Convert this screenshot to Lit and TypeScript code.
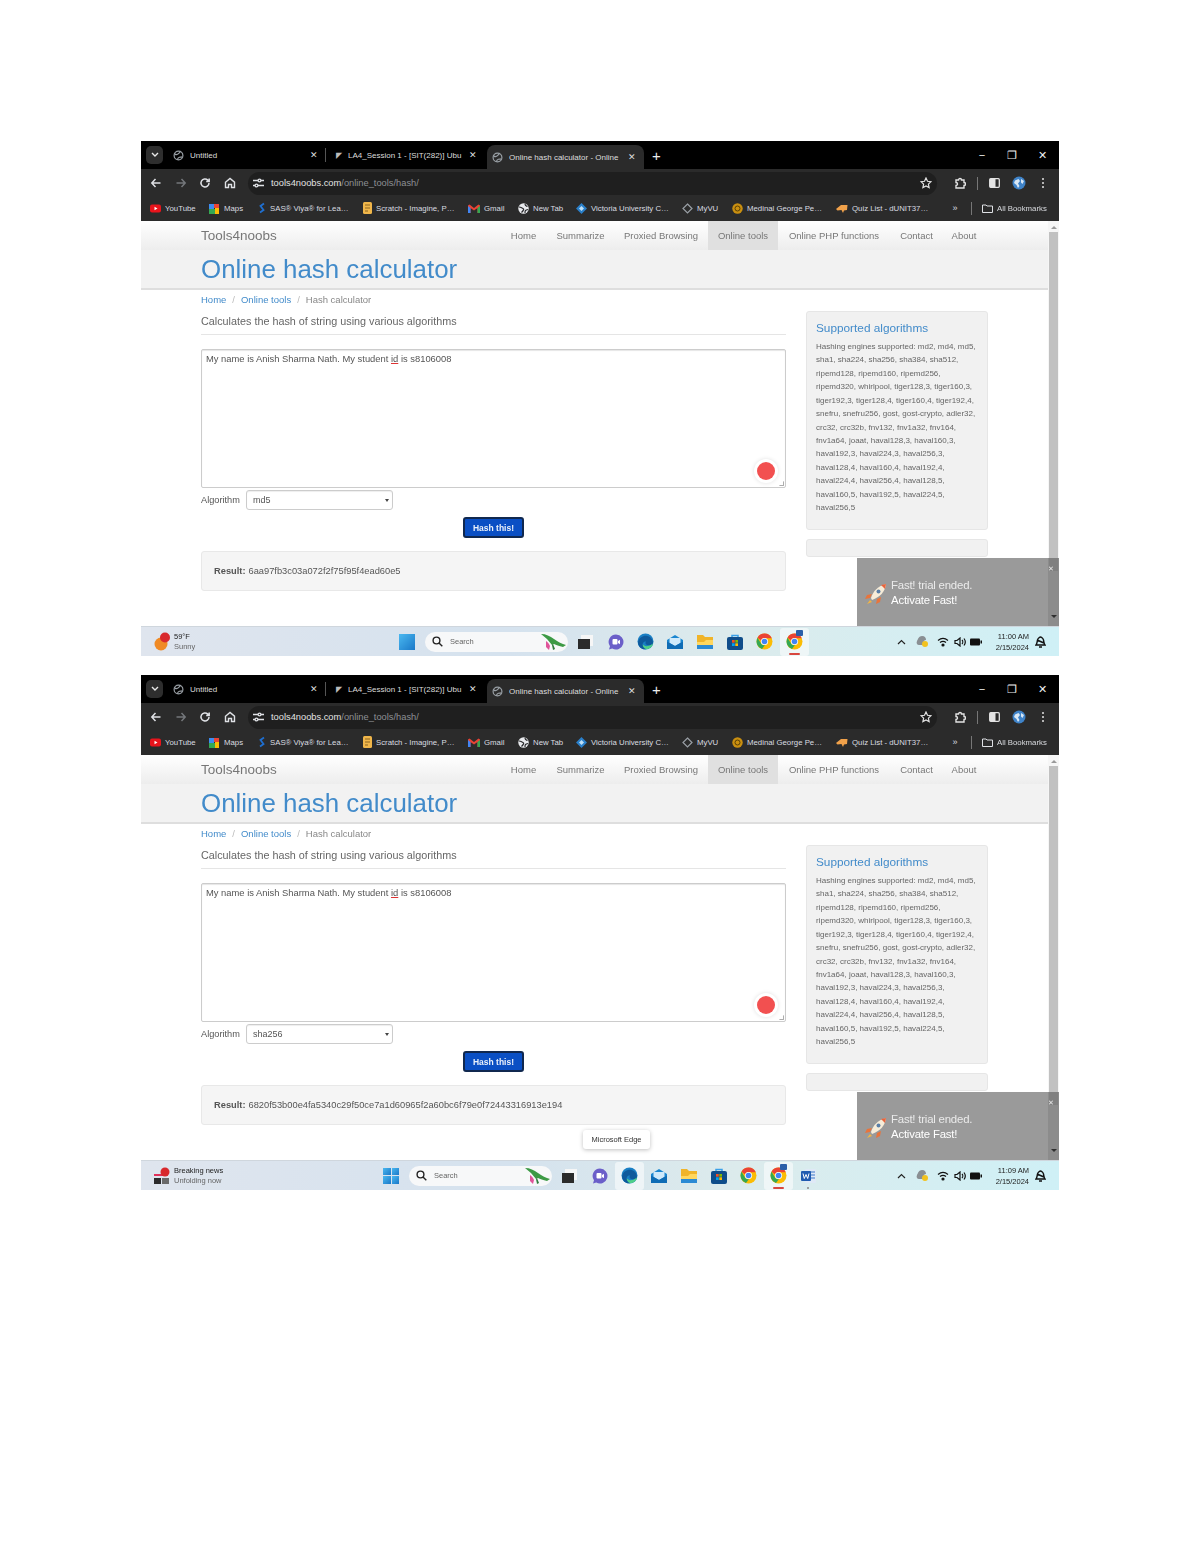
import { LitElement, html, css } from "lit";
import { customElement, property } from "lit/decorators.js";

const ALGOS = [
  "Hashing engines supported: md2, md4, md5,",
  "sha1, sha224, sha256, sha384, sha512,",
  "ripemd128, ripemd160, ripemd256,",
  "ripemd320, whirlpool, tiger128,3, tiger160,3,",
  "tiger192,3, tiger128,4, tiger160,4, tiger192,4,",
  "snefru, snefru256, gost, gost-crypto, adler32,",
  "crc32, crc32b, fnv132, fnv1a32, fnv164,",
  "fnv1a64, joaat, haval128,3, haval160,3,",
  "haval192,3, haval224,3, haval256,3,",
  "haval128,4, haval160,4, haval192,4,",
  "haval224,4, haval256,4, haval128,5,",
  "haval160,5, haval192,5, haval224,5,",
  "haval256,5",
];

const NAV: [string, number, boolean][] = [
  ["Home", 47, false],
  ["Summarize", 67, false],
  ["Proxied Browsing", 94, false],
  ["Online tools", 70, true],
  ["Online PHP functions", 112, false],
  ["Contact", 53, false],
  ["About", 42, false],
];

const globe = (c = "#9aa0a6") => html`<svg width="11" height="11" viewBox="0 0 12 12" fill="none" stroke=${c} stroke-width="1.3"><circle cx="6" cy="6" r="4.8"/><path d="M2 4.5c2 1 3 .5 4-.5s2-2 2-2.500M5 10.500c0-2 1-2 2-2.500s2 0 3-.5"/></svg>`;

const mark = {
  yt: html`<svg width="11" height="9" viewBox="0 0 11 9"><rect width="11" height="8" y=".5" rx="2" fill="#e8141c"/><path d="M4.500 2.700v3.600L7.500 4.500z" fill="#fff"/></svg>`,
  maps: html`<svg width="11" height="11" viewBox="0 0 11 11"><path d="M0 1h5v5H0z" fill="#3c8bf0"/><path d="M5 1h5v4H5z" fill="#ea4335"/><path d="M0 6h6v5H0z" fill="#34a853"/><path d="M6 5h4v6H6z" fill="#fbbc04"/></svg>`,
  sas: html`<svg width="8" height="12" viewBox="0 0 8 12" fill="none" stroke="#1f6fd0" stroke-width="1.800"><path d="M6 1.500 2.500 4 5.500 8 2 10.500"/></svg>`,
  scratch: html`<svg width="9" height="12" viewBox="0 0 9 12"><rect width="9" height="12" rx="1.500" fill="#f0b64a"/><path d="M2 3h5M2 6h5M2 9h3" stroke="#8a6420"/></svg>`,
  gmail: html`<svg width="12" height="9" viewBox="0 0 12 9"><path d="M0 1.500 1.500.5 6 4 10.500.5 12 1.500V9H9.500V4L6 6.500 2.500 4V9H0z" fill="#ea4335"/><path d="M0 2v7h2.500V4z" fill="#4285f4"/><path d="M12 2v7H9.500V4z" fill="#34a853"/></svg>`,
  newtab: html`<svg width="11" height="11" viewBox="0 0 11 11"><circle cx="5.500" cy="5.500" r="5.200" fill="#e8eaed"/><path d="M1 4c2 0 2.500 1 4 1.500S5 8 3.500 9.500M7 1c0 2 1 2 2.500 2.500M7 10c0-2 0-3 3-3.500" stroke="#292a2d" stroke-width="1.200" fill="none"/></svg>`,
  vu: html`<svg width="11" height="11" viewBox="0 0 11 11"><path d="M5.500 0 11 5.500 5.500 11 0 5.500z" fill="#2a7fc9"/><path d="M5.500 3 8 5.500 5.500 8 3 5.500z" fill="#bfe0f7"/></svg>`,
  myvu: html`<svg width="11" height="11" viewBox="0 0 11 11" fill="none" stroke="#9aa0a6" stroke-width="1.200"><path d="M5.500 1 10 5.500 5.500 10 1 5.500z"/></svg>`,
  george: html`<svg width="11" height="11" viewBox="0 0 11 11"><circle cx="5.500" cy="5.500" r="5.200" fill="#c98f10"/><circle cx="5.500" cy="5.500" r="2.500" fill="none" stroke="#5a3f05"/></svg>`,
  quiz: html`<svg width="12" height="9" viewBox="0 0 12 9"><path d="M0 5 5 1h6.500L11 6l-3 .5L7 9 5.500 6 1.500 6.500z" fill="#f0a14a"/></svg>`,
};

const BOOKMARKS: [any, string, number][] = [
  [mark.yt, "YouTube", 59],
  [mark.maps, "Maps", 49],
  [mark.sas, "SAS® Viya® for Lea…", 105],
  [mark.scratch, "Scratch - Imagine, P…", 105],
  [mark.gmail, "Gmail", 50],
  [mark.newtab, "New Tab", 58],
  [mark.vu, "Victoria University C…", 106],
  [mark.myvu, "MyVU", 50],
  [mark.george, "Medinal George Pe…", 104],
  [mark.quiz, "Quiz List - dUNIT37…", 105],
];

const ico = {
  back: html`<svg width="12" height="12" viewBox="0 0 12 12" fill="none" stroke="#dfe1e5" stroke-width="1.500"><path d="M10.500 6H2M5.500 2 1.800 6l3.700 4"/></svg>`,
  forward: html`<svg width="12" height="12" viewBox="0 0 12 12" fill="none" stroke="#74777b" stroke-width="1.500"><path d="M1.500 6H10M6.500 2l3.700 4-3.700 4"/></svg>`,
  reload: html`<svg width="12" height="12" viewBox="0 0 12 12" fill="none" stroke="#dfe1e5" stroke-width="1.500"><path d="M10 6a4 4 0 1 1-1.200-2.900L10 4.300M10.200 1.500v3H7.200"/></svg>`,
  home: html`<svg width="12" height="12" viewBox="0 0 12 12" fill="none" stroke="#dfe1e5" stroke-width="1.400"><path d="M1.500 5.200 6 1.500l4.500 3.700v5.300h-3V7.500h-3v3h-3z"/></svg>`,
  tune: html`<svg width="11" height="10" viewBox="0 0 11 10" fill="none" stroke="#dfe1e5" stroke-width="1.300"><path d="M0 2.500h5M8 2.500h3M0 7.500h2M5 7.500h6"/><circle cx="6.500" cy="2.500" r="1.400"/><circle cx="3.500" cy="7.500" r="1.400"/></svg>`,
  star: html`<svg width="12" height="12" viewBox="0 0 12 12" fill="none" stroke="#e3e3e3" stroke-width="1.200"><path d="m6 1 1.500 3.300 3.500.4-2.600 2.400.7 3.500L6 8.900l-3.100 1.700.7-3.500L1 4.700l3.500-.4z"/></svg>`,
  ext: html`<svg width="12" height="12" viewBox="0 0 12 12" fill="none" stroke="#e3e3e3" stroke-width="1.400"><path d="M2 3h2.500a1.500 1.500 0 0 1 3 0H10v2.500a1.500 1.500 0 0 1 0 3V11H2V8.500a1.500 1.500 0 0 0 0-3z"/></svg>`,
  panel: html`<svg width="11" height="10" viewBox="0 0 11 10"><rect x=".7" y=".7" width="9.600" height="8.600" rx="1" fill="none" stroke="#e3e3e3" stroke-width="1.300"/><rect x="1" y="1" width="5.500" height="8" fill="#e3e3e3"/></svg>`,
  profile: html`<svg width="14" height="14" viewBox="0 0 14 14"><circle cx="7" cy="7" r="6.500" fill="#3f83c8"/><path d="M3 4.500 6.500 3 8 5 6 7.500 7.500 10 6 12 4.500 9 2 7zM9 3l3 2-1.500 3L9 6.500z" fill="#d9e8f5"/></svg>`,
  dots: html`<svg width="4" height="12" viewBox="0 0 4 12" fill="#e3e3e3"><circle cx="2" cy="2" r="1"/><circle cx="2" cy="6" r="1"/><circle cx="2" cy="10" r="1"/></svg>`,
  folder: html`<svg width="11" height="9" viewBox="0 0 11 9" fill="none" stroke="#dfe1e5"><path d="M.5 1h3.500l1 1h5.500v6.500H.5z"/></svg>`,
  rocket: html`<svg width="24" height="24" viewBox="0 0 24 24"><path d="M8 11 3 12l-2 4 5-1zM13 16l-1 5 4-2 1-5z" fill="#e8743c"/><path d="M7 15c2-7 7-12 15-14-1 8-6 13-14 16z" fill="#f7ecd8"/><path d="M17 2l5-1-1 5z" fill="#e8643c"/><circle cx="14.500" cy="8.500" r="2" fill="#5a7fa8"/><path d="m6 17-3 4 5-2z" fill="#f2b544"/></svg>`,
  search: html`<svg width="11" height="11" viewBox="0 0 11 11" fill="none" stroke="#222" stroke-width="1.400"><circle cx="4.500" cy="4.500" r="3.400"/><path d="m7 7 3.300 3.300"/></svg>`,
  frog: html`<svg width="30" height="18" viewBox="0 0 30 18"><path d="M3 1c5 0 9 2 13 5s8 5 12 6l-3 2c-4-1-7-2-9-3l-2 1-5-6z" fill="#3d9a45"/><path d="M8 8c2 1 3 3 4 5l-1 4-3-3z" fill="#e0559a"/><path d="M15 11l2 5-2 1-1-5z" fill="#2e7d3c"/></svg>`,
  chev: html`<svg width="8" height="6" viewBox="0 0 8 6" fill="none" stroke="#e8e8e8" stroke-width="1.400"><path d="m1 1 3 3 3-3"/></svg>`,
  taskview: html`<svg width="15" height="14" viewBox="0 0 15 14"><rect x="3" y="0" width="12" height="11" fill="#f6f6f6"/><rect x="0" y="4" width="12" height="10" fill="#2b2b2b"/></svg>`,
  chat: html`<svg width="16" height="16" viewBox="0 0 16 16"><path d="M8 .5a7.500 7.500 0 1 1-3.800 14L1 15.500l1-3.200A7.500 7.500 0 0 1 8 .5z" fill="#6b5fc9"/><rect x="4.500" y="5" width="5" height="5.500" rx="1" fill="#fff"/><path d="m10 7 2-1.200v4.500L10 9z" fill="#fff"/></svg>`,
  edge: html`<svg width="17" height="17" viewBox="0 0 17 17"><circle cx="8.500" cy="8.500" r="8" fill="#1a7fc4"/><path d="M1 9.500C2 4 7 2 10.500 3 14 4 16 7 16 10c0 2-3 2.500-5.500 2C8.500 11.500 8 10 9 8.500 6.500 8 5 10.500 6 13c.5 1.500 2 3 3 3.200C5 17 1.500 14 1 9.500z" fill="#0f5a9c"/><path d="M16 10.500c-.5 3-3 5.500-6.500 5.800-2.500-.8-4-3-3.700-5C7 13 10 15 16 10.500z" fill="#50d088"/></svg>`,
  mail: html`<svg width="16" height="14" viewBox="0 0 16 14"><path d="M8 0 16 5v9H0V5z" fill="#1a86d0"/><path d="M2.500 3h11v5L8 11 2.500 8z" fill="#cfeafb"/><path d="M0 6.500 8 11l8-4.500V14H0z" fill="#0f6cb5"/></svg>`,
  files: html`<svg width="16" height="14" viewBox="0 0 16 14"><path d="M0 0h6l2 2h8v12H0z" fill="#f0b429"/><path d="M0 7h7l2-2h7v9H0z" fill="#ffd75e"/><rect y="10" width="16" height="4" fill="#2b8ad4"/></svg>`,
  store: html`<svg width="16" height="16" viewBox="0 0 16 16"><rect y="3" width="16" height="13" rx="2" fill="#0f4d8a"/><path d="M5 3V1.500h6V3" fill="none" stroke="#3aa0e8" stroke-width="1.500"/><rect x="5" y="6" width="2.700" height="2.700" fill="#f25022"/><rect x="8.300" y="6" width="2.700" height="2.700" fill="#7fba00"/><rect x="5" y="9.300" width="2.700" height="2.700" fill="#00a4ef"/><rect x="8.300" y="9.300" width="2.700" height="2.700" fill="#ffb900"/></svg>`,
  chrome: html`<svg width="17" height="17" viewBox="0 0 17 17"><circle cx="8.500" cy="8.500" r="8" fill="#fbbc04"/><path d="M1.500 4.800A8 8 0 0 1 15.800 5.200H8.500a3.500 3.500 0 0 0-3.300 2.400z" fill="#ea4335"/><path d="M1.500 4.800 5.200 10.800a3.500 3.500 0 0 0 3.800 1.200L6 16.100A8 8 0 0 1 1.500 4.800z" fill="#34a853"/><circle cx="8.500" cy="8.500" r="3.600" fill="#fff"/><circle cx="8.500" cy="8.500" r="2.800" fill="#4285f4"/></svg>`,
  word: html`<svg width="15" height="16" viewBox="0 0 15 16"><rect x="4" y="1" width="11" height="14" rx="1" fill="#dfe9f6"/><path d="M9 4h5M9 7h5M9 10h5" stroke="#3a78c9"/><rect y="3" width="10" height="10" rx="1" fill="#1f5bb0"/><path d="m2 5.500 1.300 5 1.700-4 1.700 4L8 5.500" fill="none" stroke="#fff"/></svg>`,
  weather: html`<svg width="13" height="13" viewBox="0 0 13 13"><path d="M6 1c3 0 4 2 4 4-2 0-3 2-3 5H3C1 10 0 8 1 6s2-5 5-5z" fill="#8a8f93"/><circle cx="9" cy="9" r="3" fill="#f2c21f"/></svg>`,
  wifi: html`<svg width="12" height="10" viewBox="0 0 12 10" fill="none" stroke="#111" stroke-width="1.200"><path d="M1 3.500C4 1 8 1 11 3.500M3 5.500c2-1.500 4-1.500 6 0"/><circle cx="6" cy="8" r="1" fill="#111"/></svg>`,
  sound: html`<svg width="12" height="10" viewBox="0 0 12 10" fill="none" stroke="#111" stroke-width="1.200"><path d="M1 3.500h2L6 1v8L3 6.500H1zM8 3c1 1 1 3 0 4M10 1.500c1.500 2 1.500 5 0 7"/></svg>`,
  battery: html`<svg width="12" height="8" viewBox="0 0 12 8"><rect width="10" height="7" y=".5" rx="1" fill="#111"/><rect x="10.500" y="2.500" width="1.500" height="3" fill="#111"/></svg>`,
  bell: html`<svg width="11" height="12" viewBox="0 0 11 12" fill="none" stroke="#111" stroke-width="1.400"><path d="M1 9c1-1 1-3 1.500-5S5 1 5.500 1 8 2 8.500 4 9 8 10 9zM4 11h3M2 4l7 3"/></svg>`,
  sun: html`<svg width="18" height="19" viewBox="0 0 18 19"><circle cx="7" cy="12" r="6.500" fill="#f08a24"/><circle cx="11" cy="5.500" r="5" fill="#d8282c"/></svg>`,
  news: html`<svg width="18" height="18" viewBox="0 0 18 18"><path d="M0 8h10" stroke="#e0305a" stroke-width="2"/><circle cx="11" cy="5" r="4.500" fill="#d8282c"/><rect y="11" width="7" height="6" fill="#2b2b2b"/><rect x="8" y="11" width="7" height="6" fill="#6a6a6a"/></svg>`,
};

@customElement("hash-shot")
class HashShot extends LitElement {
  @property() algo = "md5";
  @property() hash = "";
  @property() time = "";
  @property() widgetTop = "";
  @property() widgetSub = "";
  @property({ type: Number }) offset = 0;
  @property({ type: Boolean }) later = false;

  static styles = css`
    :host { display: block; width: 918px; height: 515px; font-family: "Liberation Sans", Arial, sans-serif; }
    .shot { display: grid; grid-template-rows: 28px 28px 24px 405px 30px; height: 515px; filter: blur(0.45px); }

    .tabs { background: #000; display: flex; align-items: stretch; padding-left: 5px; color: #dcdcdc; font-size: 8px; }
    .chev { width: 17px; height: 18px; margin: 5px 5px 0 0; border-radius: 5px; background: #2e2e2e; display: flex; align-items: center; justify-content: center; }
    .tab { display: flex; align-items: center; gap: 6px; padding: 0 10px 0 4px; box-sizing: border-box; }
    .tab .t { flex: 1; white-space: nowrap; overflow: hidden; }
    .tab .x { font-size: 9px; color: #ddd; }
    .tab.first { width: 157px; padding-left: 5px; padding-right: 7px; }
    .tab.second { width: 162px; padding-left: 10px; border-left: 1px solid #555; height: 14px; align-self: center; }
    .tab.active { width: 157px; background: #2b2b2b; border-radius: 8px 8px 0 0; padding-left: 5px; padding-right: 8px; margin-top: 4px; }
    .plus { margin-left: 8px; align-self: center; color: #eee; font-size: 15px; line-height: 1; }
    .win { margin-left: auto; padding-right: 2px; display: flex; align-items: center; color: #eee; font-size: 11px; }
    .win span { width: 30px; text-align: center; }

    .bar { background: #2b2b2b; display: flex; align-items: center; padding-left: 9px; }
    .nav-i { width: 24.500px; display: flex; }
    .omni { width: 689px; height: 23px; background: #1f1f1f; border-radius: 12px; display: flex; align-items: center; padding: 0 5px; box-sizing: border-box; gap: 7px; color: #8d9094; font-size: 9.300px; }
    .omni b { color: #e3e3e3; font-weight: 400; }
    .omni .url { flex: 1; white-space: nowrap; }
    .tools { display: flex; align-items: center; margin-left: 17px; }
    .sep { width: 1px; height: 13px; background: #777; }

    .marks { background: #2b2b2b; display: flex; align-items: center; padding: 0 0 2px 9px; color: #dadce0; font-size: 7.800px; }
    .mk { display: flex; align-items: center; gap: 4px; white-space: nowrap; box-sizing: border-box; padding-right: 8px; }
    .more { width: 28px; text-align: center; margin-right: 2px; font-size: 9px; }
    .all { display: flex; align-items: center; gap: 4px; margin-left: 10px; white-space: nowrap; }

    .view { position: relative; display: flex; overflow: hidden; background: #fff; }
    .doc { flex: 1; min-width: 0; }
    .navbar { height: 29px; background: linear-gradient(#fff, #ededed); display: flex; align-items: center; padding: 0 63px 0 60px; color: #777; }
    .brand { font-size: 13.500px; }
    .links { margin-left: auto; display: flex; align-self: stretch; font-size: 9.500px; }
    .links span { display: flex; align-items: center; justify-content: center; white-space: nowrap; }
    .links .on { background: #e0e0e0; }
    .jumbo { height: 38px; background: #f2f2f2; border-bottom: 2px solid #dedede; padding-left: 60px; display: flex; align-items: center; color: #428bca; font-size: 25.900px; }
    .crumb { padding: 4px 0 0 60px; height: 14px; font-size: 9.500px; color: #888; line-height: 12px; }
    .crumb a { color: #428bca; }
    .crumb i { font-style: normal; color: #bbb; margin: 0 6px; }
    .cols { display: flex; gap: 20px; padding-left: 60px; align-items: flex-start; margin-top: 5px; }
    .left { width: 585px; }
    .lead { font-size: 10.800px; color: #666; height: 21px; line-height: 16px; border-bottom: 1px solid #e5e5e5; }
    .area { position: relative; margin-top: 14px; height: 139px; box-sizing: border-box; border: 1px solid #ccc; border-radius: 2px; box-shadow: inset 0 1px 1px rgba(0,0,0,.1); padding: 3px 4px; font-size: 9.400px; color: #555; line-height: 12px; }
    .area u { text-decoration-color: #d33; }
    .dot { position: absolute; right: 10px; bottom: 7px; width: 18px; height: 18px; border-radius: 50%; background: #f25050; box-shadow: 0 0 0 3px #fff, 0 0 4px 3px rgba(0,0,0,.12); }
    .grip { position: absolute; right: 0; bottom: 0; width: 6px; height: 6px; border-right: 1px solid #777; border-bottom: 1px solid #777; transform: scale(.6); }
    .row { display: flex; align-items: center; margin-top: 2px; height: 20px; font-size: 9.200px; color: #555; gap: 6px; }
    .row label { width: 39px; white-space: nowrap; }
    .sel { width: 147px; height: 20px; box-sizing: border-box; border: 1px solid #ccc; border-radius: 3px; display: flex; align-items: center; justify-content: space-between; padding: 0 3px 0 6px; font-size: 9px; color: #555; box-shadow: inset 0 1px 1px rgba(0,0,0,.07); }
    .sel::after { content: ""; border: 2.500px solid transparent; border-top: 3px solid #444; margin-top: 3px; }
    .btnrow { display: flex; justify-content: center; margin-top: 7px; }
    .btn { width: 61px; height: 21px; box-sizing: border-box; border: 2px solid #10284f; border-radius: 3px; background: #0a4fc4; color: #eaf1fb; font-size: 8.500px; font-weight: 700; display: flex; align-items: center; justify-content: center; }
    .result { margin-top: 13px; height: 40px; box-sizing: border-box; background: #f5f5f5; border: 1px solid #e8e8e8; border-radius: 3px; padding-left: 12px; display: flex; align-items: center; gap: 3px; font-size: 9.300px; color: #555; white-space: nowrap; }
    .right { width: 182px; margin-top: -2px; }
    .well { background: #f1f1f1; border: 1px solid #e6e6e6; border-radius: 3px; box-sizing: border-box; }
    .algos { height: 219px; padding: 9px 9px 0; }
    .algos h4 { margin: 0 0 4px; font-weight: 400; font-size: 11.800px; line-height: 15px; color: #428bca; }
    .algos div { font-size: 8px; line-height: 13.420px; color: #666; white-space: nowrap; }
    .empty { height: 18px; margin-top: 9px; }

    .scroll { width: 11px; background: #f6f6f6; position: relative; display: flex; flex-direction: column; align-items: center; }
    .up { width: 0; height: 0; border: 3px solid transparent; border-bottom: 3.500px solid #999; margin-top: 2px; }
    .thumb { width: 9px; flex: 1; background: #c1c1c1; margin: 3px 0 55px; }

    .toast { position: absolute; right: 0; bottom: 0; width: 202px; height: 68px; background: rgba(120,120,120,.75); color: #fff; display: flex; align-items: center; gap: 3px; padding-left: 7px; box-sizing: border-box; }
    .toast::after { content: ""; position: absolute; right: 0; top: 0; bottom: 0; width: 11px; background: rgba(0,0,0,.08); }
    .toast svg { margin-top: 6px; }
    .toast .lines { font-size: 11.400px; line-height: 14.500px; letter-spacing: -.2px; padding-top: 1px; }
    .toast .lines span { display: block; }
    .toast .lines .dim { opacity: .8; }
    .toast .close { position: absolute; right: 5px; top: 7px; font-size: 7px; }
    .toast .down { position: absolute; right: 2px; bottom: 5px; border: 3px solid transparent; border-top: 3.500px solid #333; }
    .tip { position: absolute; left: 442px; bottom: 11px; width: 67px; height: 19px; background: #fff; border-radius: 3px; box-shadow: 0 1px 4px rgba(0,0,0,.25); color: #333; font-size: 7.500px; display: flex; align-items: center; justify-content: center; white-space: nowrap; }

    .task { background: linear-gradient(90deg, #dfe5ee 0%, #d5e2ee 40%, #dcebec 65%, #cff0f6 100%); display: flex; align-items: center; color: #222; border-top: 1px solid #cfd6dd; box-sizing: border-box; }
    .widget { display: flex; align-items: center; gap: 2px; padding-left: 13px; width: 100px; box-sizing: border-box; font-size: 7.500px; line-height: 10px; white-space: nowrap; }
    .widget small { display: block; font-size: 7.500px; color: #666; }
    .center { display: flex; align-items: center; }
    .start { width: 16px; height: 16px; display: grid; grid-template: 1fr 1fr / 1fr 1fr; margin-right: 10px; background: linear-gradient(135deg, #4ab8f0, #1a78c8); }
    .start.split { gap: 1px; background: none; }
    .start.split i { background: linear-gradient(135deg, #4ab8f0, #1a78c8); }
    .searchbox { width: 143px; height: 20px; border-radius: 10px; background: #f7f8f9; display: flex; align-items: center; gap: 7px; padding: 0 0 0 7px; box-sizing: border-box; font-size: 7.500px; color: #666; margin-right: 3px; }
    .searchbox span { flex: 1; }
    .cell { width: 29.800px; height: 28px; display: flex; align-items: center; justify-content: center; position: relative; border-radius: 3px; }
    .cell.hl { background: rgba(255,255,255,.55); }
    .cell.cur::after { content: ""; position: absolute; bottom: 1px; left: 9px; right: 9px; height: 2px; background: #d8473f; border-radius: 1px; }
    .cell.cur::before { content: ""; position: absolute; top: 2px; right: 6px; width: 7px; height: 6px; background: #2b5fa8; border-radius: 1px; }
    .cell.open::after { content: ""; position: absolute; bottom: 1px; left: 14px; width: 2px; height: 2px; background: #888; border-radius: 1px; }
    .tray { margin-left: auto; display: flex; align-items: center; }
    .tray > span { display: flex; justify-content: center; align-items: center; }
    .clock { width: 45px; text-align: right; font-size: 7.500px; line-height: 11px; white-space: nowrap; }
  `;

  render() {
    const tools = [ico.taskview, ico.chat, ico.edge, ico.mail, ico.files, ico.store, ico.chrome, ico.chrome];
    return html`<div class="shot">
      <div class="tabs">
        <div class="chev">${ico.chev}</div>
        <div class="tab first">${globe()}<span class="t">Untitled</span><span class="x">✕</span></div>
        <div class="tab second"><span style="color:#bbb">◤</span><span class="t">LA4_Session 1 - [SIT(282)] Ubu</span><span class="x">✕</span></div>
        <div class="tab active">${globe()}<span class="t">Online hash calculator - Online</span><span class="x">✕</span></div>
        <div class="plus">+</div>
        <div class="win"><span>−</span><span>❐</span><span>✕</span></div>
      </div>
      <div class="bar">
        <span class="nav-i">${ico.back}</span><span class="nav-i">${ico.forward}</span><span class="nav-i">${ico.reload}</span><span class="nav-i">${ico.home}</span>
        <div class="omni">${ico.tune}<span class="url"><b>tools4noobs.com</b>/online_tools/hash/</span>${ico.star}</div>
        <div class="tools">
          ${ico.ext}<span class="sep" style="margin:0 11px"></span>${ico.panel}
          <span style="width:12px"></span>${ico.profile}<span style="width:15px"></span>${ico.dots}
        </div>
      </div>
      <div class="marks">
        ${BOOKMARKS.map(([m, t, w]) => html`<div class="mk" style="width:${w}px">${m}<span>${t}</span></div>`)}
        <span class="more">»</span><span class="sep"></span>
        <div class="all">${ico.folder}<span>All Bookmarks</span></div>
      </div>
      <div class="view">
        <div class="doc">
          <div class="navbar">
            <span class="brand">Tools4noobs</span>
            <div class="links">${NAV.map(([t, w, on]) => html`<span class=${on ? "on" : ""} style="width:${w}px">${t}</span>`)}</div>
          </div>
          <div class="jumbo">Online hash calculator</div>
          <div class="crumb"><a>Home</a><i>/</i><a>Online tools</a><i>/</i>Hash calculator</div>
          <div class="cols">
            <div class="left">
              <div class="lead">Calculates the hash of string using various algorithms</div>
              <div class="area">My name is Anish Sharma Nath. My student <u>id</u> is s8106008<span class="dot"></span><span class="grip"></span></div>
              <div class="row"><label>Algorithm</label><div class="sel">${this.algo}</div></div>
              <div class="btnrow"><div class="btn">Hash this!</div></div>
              <div class="result"><b>Result:</b><span>${this.hash}</span></div>
            </div>
            <div class="right">
              <div class="well algos">
                <h4>Supported algorithms</h4>
                ${ALGOS.map((l) => html`<div>${l}</div>`)}
              </div>
              <div class="well empty"></div>
            </div>
          </div>
        </div>
        <div class="scroll"><span class="up"></span><span class="thumb"></span></div>
        <div class="toast">
          ${ico.rocket}
          <div class="lines"><span class="dim">Fast! trial ended.</span><span>Activate Fast!</span></div>
          <span class="close">✕</span><span class="down"></span>
        </div>
        ${this.later ? html`<div class="tip">Microsoft Edge</div>` : ""}
      </div>
      <div class="task">
        <div class="widget">${this.later ? ico.news : ico.sun}<span>${this.widgetTop}<small>${this.widgetSub}</small></span></div>
        <div class="center" style="margin-left:${this.offset}px">
          <div class="start ${this.later ? "split" : ""}"><i></i><i></i><i></i><i></i></div>
          <div class="searchbox">${ico.search}<span>Search</span>${ico.frog}</div>
          ${tools.map((t, i) => html`<div class="cell ${i === 7 ? "hl cur" : ""} ${i === 2 && this.later ? "hl" : ""}">${t}</div>`)}
          ${this.later ? html`<div class="cell open">${ico.word}</div>` : ""}
        </div>
        <div class="tray">
          <span style="width:20px"><svg width="9" height="6" viewBox="0 0 9 6" fill="none" stroke="#222" stroke-width="1.200"><path d="m1 5 3.500-3.500L8 5"/></svg></span>
          <span style="width:22px">${ico.weather}</span>
          <span style="width:19px">${ico.wifi}</span>
          <span style="width:15px">${ico.sound}</span>
          <span style="width:17px">${ico.battery}</span>
          <div class="clock">${this.time}<br />2/15/2024</div>
          <span style="width:30px;padding-right:8px;box-sizing:border-box">${ico.bell}</span>
        </div>
      </div>
    </div>`;
  }
}

@customElement("app-root")
export class AppRoot extends LitElement {
  static styles = css`
    :host { display: block; width: 1200px; height: 1553px; background: #fff; overflow: hidden; }
    .stack { display: flex; flex-direction: column; gap: 19px; padding: 141px 0 0 141px; }
  `;
  render() {
    return html`<div class="stack">
      <hash-shot algo="md5" hash="6aa97fb3c03a072f2f75f95f4ead60e5" time="11:00 AM" widgetTop="59°F" widgetSub="Sunny" offset="158"></hash-shot>
      <hash-shot algo="sha256" hash="6820f53b00e4fa5340c29f50ce7a1d60965f2a60bc6f79e0f72443316913e194" time="11:09 AM" widgetTop="Breaking news" widgetSub="Unfolding now" offset="142" later></hash-shot>
    </div>`;
  }
}
void HashShot;
